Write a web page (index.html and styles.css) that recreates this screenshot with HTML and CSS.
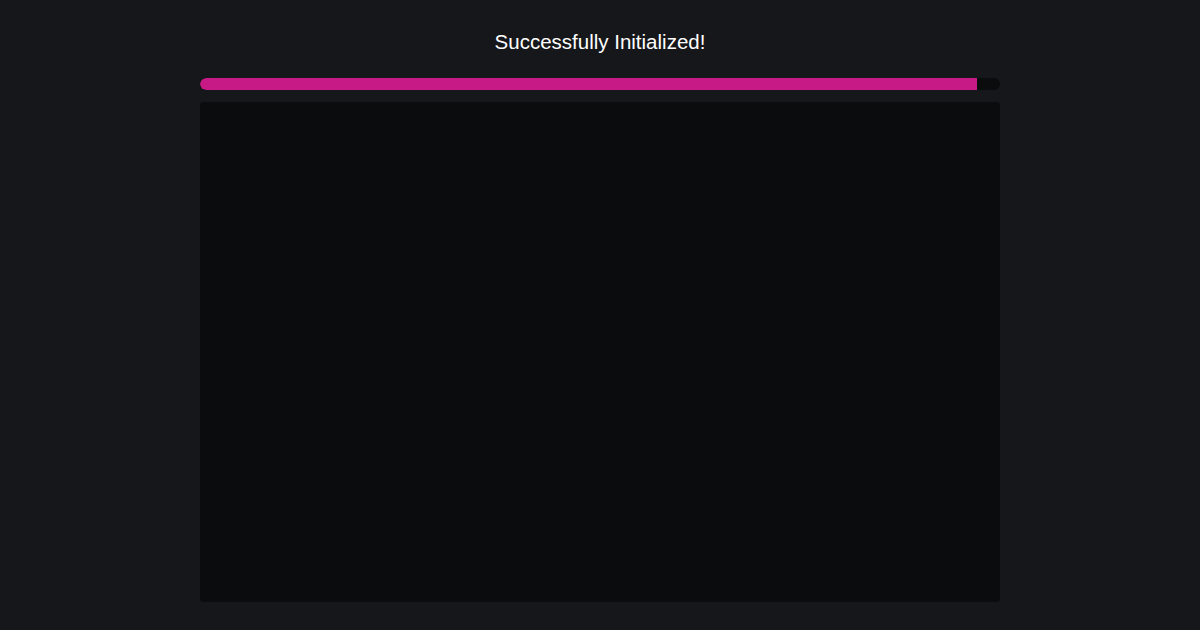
FILE: index.html
```html
<!DOCTYPE html>
<html>
<head>
<meta charset="utf-8">
<link rel="stylesheet" href="styles.css">
</head>
<body>
<main class="wrap">
  <h1 class="title">Successfully Initialized!</h1>
  <div class="track"><div class="fill" style="width: 97.125%"></div></div>
  <div class="console"></div>
</main>
</body>
</html>
```

FILE: styles.css
```css
html, body {
  margin: 0;
  padding: 0;
  background: #16171a;
  height: 100%;
}
body {
  font-family: "Liberation Sans", Arial, sans-serif;
  color: #ffffff;
}
.wrap {
  width: 800px;
  margin: 0 auto;
  padding-top: 30px;
  display: flex;
  flex-direction: column;
}
.title {
  margin: 0;
  font-size: 20.5px;
  font-weight: normal;
  line-height: 24px;
  text-align: center;
  height: 24px;
}
.track {
  margin-top: 24px;
  height: 12px;
  border-radius: 6px;
  background: #0b0c0e;
  overflow: hidden;
}
.fill {
  height: 100%;
  background: #c81a86;
  border-radius: 6px 0 0 6px;
}
.console {
  margin-top: 12px;
  height: 500px;
  border-radius: 4px;
  background: #0b0c0e;
}
```
